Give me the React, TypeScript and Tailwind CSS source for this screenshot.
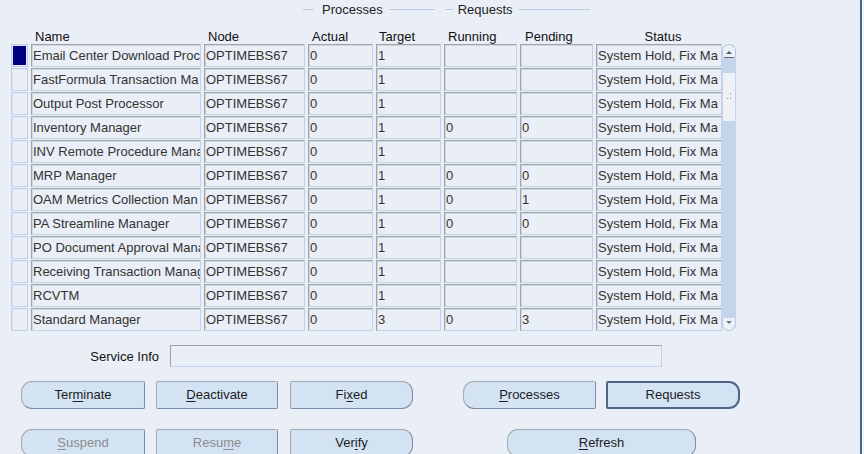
import React from "react";

type Row = {
    name: string;
    actual: string;
    target: string;
    running: string;
    pending: string;
};

// names as far as the column shows them
const ROWS: Row[] = [
    { name: "Email Center Download Proc", actual: "0", target: "1", running: "", pending: "" },
    { name: "FastFormula Transaction Ma", actual: "0", target: "1", running: "", pending: "" },
    { name: "Output Post Processor", actual: "0", target: "1", running: "", pending: "" },
    { name: "Inventory Manager", actual: "0", target: "1", running: "0", pending: "0" },
    { name: "INV Remote Procedure Mana", actual: "0", target: "1", running: "", pending: "" },
    { name: "MRP Manager", actual: "0", target: "1", running: "0", pending: "0" },
    { name: "OAM Metrics Collection Man", actual: "0", target: "1", running: "0", pending: "1" },
    { name: "PA Streamline Manager", actual: "0", target: "1", running: "0", pending: "0" },
    { name: "PO Document Approval Mana", actual: "0", target: "1", running: "", pending: "" },
    { name: "Receiving Transaction Manag", actual: "0", target: "1", running: "", pending: "" },
    { name: "RCVTM", actual: "0", target: "1", running: "", pending: "" },
    { name: "Standard Manager", actual: "0", target: "3", running: "0", pending: "3" },
];

const cellBox =
    "h-[23px] border border-t-[#9ea3a9] border-l-[#9ea3a9] border-b-[#c2d2ea] border-r-[#c2d2ea] shadow-[inset_1px_1px_0_#d3d7dd] bg-[#eaeef6] pl-[1px] leading-[22px] whitespace-nowrap overflow-hidden text-[#333]";

function Cell({ w, text }: { w: string; text: string }) {
    return <div className={`${w} ${cellBox}`}>{text}</div>;
}

// mnemonic letter gets an underline, like the forms buttons
function Label({ text, mn }: { text: string; mn?: number }) {
    if (mn === undefined) return <>{text}</>;
    return (
        <>
            {text.slice(0, mn)}
            <span className="underline underline-offset-2">{text[mn]}</span>
            {text.slice(mn + 1)}
        </>
    );
}

function Btn({
    text,
    mn,
    w,
    shape,
    disabled,
    focused,
}: {
    text: string;
    mn?: number;
    w: string;
    shape: string;
    disabled?: boolean;
    focused?: boolean;
}) {
    return (
        <div
            className={`${w} ${shape} h-[28px] flex items-center justify-center bg-[#d3e3f4] ${
                focused
                    ? "border-2 border-[#4f6586]"
                    : "border border-t-[#a4a9b0] border-l-[#a4a9b0] border-b-[#7b8da8] border-r-[#7b8da8]"
            } ${disabled ? "text-[#8c8c8c]" : "text-[#1c1c1c]"}`}
        >
            <Label text={text} mn={mn} />
        </div>
    );
}

export default function App() {
    return (
        <div className="flex w-[864px] h-[454px] overflow-hidden bg-[#eaeef6] font-['Liberation_Sans',Arial,sans-serif] text-[13px]">
            <div className="w-[860px] flex flex-col">
                {/* group captions */}
                <div className="h-[18px] pt-px flex items-center text-[#222]">
                    <div className="ml-[303px] w-[11px] h-px bg-[#b9c9e1]" />
                    <span className="ml-[8px]">Processes</span>
                    <div className="ml-[6px] w-[46px] h-px bg-[#b9c9e1]" />
                    <div className="ml-[10px] w-[8px] h-px bg-[#b9c9e1]" />
                    <span className="ml-[5px]">Requests</span>
                    <div className="ml-[6px] w-[71px] h-px bg-[#b9c9e1]" />
                </div>

                {/* column headers */}
                <div className="mt-[10px] h-[16px] pt-px leading-[16px] flex gap-[3px] pl-[11px] text-[#111]">
                    <div className="w-[17px]" />
                    <div className="w-[170px] pl-[4px]">Name</div>
                    <div className="w-[101px] pl-[4px]">Node</div>
                    <div className="w-[65px] pl-[4px]">Actual</div>
                    <div className="w-[65px] pl-[3px]">Target</div>
                    <div className="w-[73px] pl-[4px]">Running</div>
                    <div className="w-[73px] pl-[5px]">Pending</div>
                    <div className="w-[126px] text-center pl-[8px]">Status</div>
                </div>

                {/* rows + scrollbar */}
                <div className="flex pl-[11px]">
                    <div className="flex flex-col gap-[1px]">
                        {ROWS.map((r, i) => (
                            <div key={r.name} className="flex gap-[3px]">
                                <div className="w-[17px] h-[23px] border border-[#c0d0e8] shadow-[inset_1px_1px_0_#dde5f0] p-px">
                                    {i === 0 && <div className="w-full h-full bg-[#000080]" />}
                                </div>
                                <Cell w="w-[170px]" text={r.name} />
                                <Cell w="w-[101px]" text="OPTIMEBS67" />
                                <Cell w="w-[65px]" text={r.actual} />
                                <Cell w="w-[65px]" text={r.target} />
                                <Cell w="w-[73px]" text={r.running} />
                                <Cell w="w-[73px]" text={r.pending} />
                                <Cell w="w-[126px]" text="System Hold, Fix Ma" />
                            </div>
                        ))}
                    </div>

                    <div className="w-[14px] h-[287px] flex flex-col">
                        <div className="h-[14px] rounded-t-[7px] border border-b-0 border-[#b6c6de] bg-[#eef2f8] flex flex-col items-center justify-end">
                            <svg width="10" height="8" viewBox="0 0 10 8">
                                <path d="M2 5 L5 2 L8 5 Z" fill="#4e5a68" />
                            </svg>
                            <div className="w-[10px] h-px bg-[#5b6673]" />
                        </div>
                        <div className="h-[15px] bg-[#c3d4eb]" />
                        <div className="h-[48px] bg-[#eef2f8] border-x border-[#c3d4eb] flex items-center justify-center">
                            <svg width="8" height="8" viewBox="0 0 8 8">
                                <path d="M5 1 L6 0 M2 6 L3 5 M5 6 L6 5" stroke="#8a96a8" strokeWidth="1" />
                            </svg>
                        </div>
                        <div className="flex-1 bg-[#c3d4eb]" />
                        <div className="h-[13px] rounded-b-[7px] border border-t-0 border-[#b6c6de] bg-[#eef2f8] flex items-start justify-center">
                            <svg width="10" height="8" viewBox="0 0 10 8">
                                <path d="M2 3 L5 6 L8 3 Z" fill="#6e7a8a" />
                            </svg>
                        </div>
                    </div>
                </div>

                {/* service info */}
                <div className="mt-[14px] flex items-center h-[22px]">
                    <div className="w-[159px] pt-px text-right text-[#111]">Service Info</div>
                    <div className="ml-[11px] w-[492px] h-[22px] border border-t-[#9ea3a9] border-l-[#9ea3a9] border-b-[#c2d2ea] border-r-[#c2d2ea] bg-[#eaeef6]" />
                </div>

                {/* buttons */}
                <div className="mt-[14px] flex items-center pl-[21px]">
                    <Btn text="Terminate" mn={3} w="w-[124px]" shape="rounded-l-[11px] rounded-r-[2px]" />
                    <div className="ml-[11px]">
                        <Btn text="Deactivate" mn={0} w="w-[122px]" shape="rounded-[2px]" />
                    </div>
                    <div className="ml-[12px]">
                        <Btn text="Fixed" mn={2} w="w-[123px]" shape="rounded-r-[11px] rounded-l-[2px]" />
                    </div>
                    <div className="ml-[50px]">
                        <Btn text="Processes" mn={0} w="w-[133px]" shape="rounded-l-[11px] rounded-r-[2px]" />
                    </div>
                    <div className="ml-[10px]">
                        <Btn text="Requests" w="w-[134px]" shape="rounded-r-[11px] rounded-l-[2px]" focused />
                    </div>
                </div>

                <div className="mt-[20px] flex items-center pl-[21px]">
                    <Btn text="Suspend" mn={0} w="w-[124px]" shape="rounded-l-[11px] rounded-r-[2px]" disabled />
                    <div className="ml-[11px]">
                        <Btn text="Resume" mn={4} w="w-[122px]" shape="rounded-[2px]" disabled />
                    </div>
                    <div className="ml-[12px]">
                        <Btn text="Verify" mn={3} w="w-[123px]" shape="rounded-r-[11px] rounded-l-[2px]" />
                    </div>
                    <div className="ml-[94px]">
                        <Btn text="Refresh" mn={0} w="w-[189px]" shape="rounded-[11px]" />
                    </div>
                </div>
            </div>
            <div className="w-[2px] bg-[#4a6494]" />
            <div className="flex-1 bg-[#f3f5f9]" />
        </div>
    );
}
